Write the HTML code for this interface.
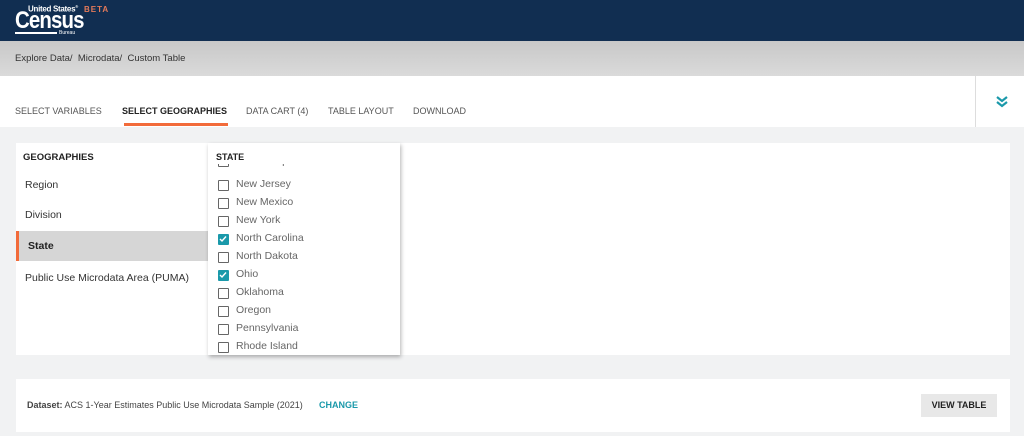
<!DOCTYPE html><html><head><style>
*{margin:0;padding:0;box-sizing:border-box}
body{width:1024px;height:436px;overflow:hidden;background:#f1f2f3;font-family:"Liberation Sans",sans-serif;position:relative}
.a{position:absolute}
.hdr{left:0;top:0;width:1024px;height:41px;background:#112e51}
.bc{left:0;top:41px;width:1024px;height:35px;background:linear-gradient(#c8c8c8,#dadada);font-size:9.5px;color:#333}
.tabs{left:0;top:76px;width:1024px;height:51px;background:#fff}
.tab{position:absolute;top:30px;font-size:9px;color:#555}
.cb{position:absolute;left:10px;width:11px;height:11px;border:1.5px solid #666;border-radius:1px}
.cb.on{background:#1a99aa;border-color:#1a99aa}
.st{position:absolute;left:28px;font-size:10.5px;color:#666}
</style></head><body>
<div class="a hdr">
<div class="a" style="left:28px;top:4px;color:#fff;font-size:8px;font-weight:bold;letter-spacing:-0.3px">United States<sup style="font-size:4px">®</sup></div>
<div class="a" style="left:84px;top:5px;color:#e47a5a;font-size:8px;letter-spacing:1px;font-weight:bold">BETA</div>
<div class="a" style="left:15px;top:9px;color:#fff;font-size:24px;font-weight:bold;letter-spacing:-1px;transform:scaleX(0.85);transform-origin:left;line-height:24px">Census</div>
<div class="a" style="left:15px;top:32px;width:42px;height:2px;background:#fff"></div>
<div class="a" style="left:59px;top:30px;color:#fff;font-size:5px">Bureau</div>
</div>
<div class="a bc"><span class="a" style="left:15px;top:12px">Explore Data/&nbsp; Microdata/&nbsp; Custom Table</span></div>
<div class="a tabs">
<span class="tab" style="left:15px">SELECT VARIABLES</span>
<span class="tab" style="left:122px;color:#222;font-weight:bold">SELECT GEOGRAPHIES</span>
<div class="a" style="left:124px;top:47px;width:104px;height:3px;background:#f26b3a"></div>
<span class="tab" style="left:246px">DATA CART (4)</span>
<span class="tab" style="left:328px">TABLE LAYOUT</span>
<span class="tab" style="left:413px">DOWNLOAD</span>
<div class="a" style="left:975px;top:0;width:1px;height:51px;background:#ddd"></div>
<svg class="a" style="left:995px;top:19px" width="14" height="14" viewBox="0 0 14 14"><path d="M2 2l5 4 5-4M2 7l5 4 5-4" fill="none" stroke="#1a99aa" stroke-width="2.2"/></svg>
</div>
<div class="a" style="left:16px;top:143px;width:994px;height:212px;background:#fff"></div>
<div class="a" style="left:16px;top:143px;width:192px;height:212px;font-size:10.5px;color:#333">
<div class="a" style="left:7px;top:9px;font-size:9.5px;font-weight:bold;color:#222">GEOGRAPHIES</div>
<div class="a" style="left:9px;top:36px">Region</div>
<div class="a" style="left:9px;top:66px">Division</div>
<div class="a" style="left:0;top:88px;width:192px;height:30px;background:#d6d6d6;border-left:3px solid #f26b3a"></div>
<div class="a" style="left:12px;top:97px;font-weight:bold;color:#222">State</div>
<div class="a" style="left:9px;top:129px">Public Use Microdata Area (PUMA)</div>
</div>
<div class="a" style="left:208px;top:143px;width:192px;height:212px;background:#fff;box-shadow:1px 2px 4px rgba(0,0,0,.3);overflow:hidden">
<div class="a" style="left:8px;top:9px;font-size:9px;font-weight:bold;color:#222">STATE</div>
<div class="a" style="left:0;top:21px;width:192px;height:191px;overflow:hidden">
<div class="cb" style="top:-8px"></div><span class="st" style="top:-9px">New Hampshire</span>
<div class="cb" style="top:16px"></div><span class="st" style="top:14px">New Jersey</span>
<div class="cb" style="top:34px"></div><span class="st" style="top:32px">New Mexico</span>
<div class="cb" style="top:52px"></div><span class="st" style="top:50px">New York</span>
<div class="cb on" style="top:70px"><svg width="8" height="8" style="position:absolute;left:0;top:0" viewBox="0 0 8 8"><path d="M1 4l2 2 4-4.5" fill="none" stroke="#fff" stroke-width="1.4"/></svg></div><span class="st" style="top:68px">North Carolina</span>
<div class="cb" style="top:88px"></div><span class="st" style="top:86px">North Dakota</span>
<div class="cb on" style="top:106px"><svg width="8" height="8" style="position:absolute;left:0;top:0" viewBox="0 0 8 8"><path d="M1 4l2 2 4-4.5" fill="none" stroke="#fff" stroke-width="1.4"/></svg></div><span class="st" style="top:104px">Ohio</span>
<div class="cb" style="top:124px"></div><span class="st" style="top:122px">Oklahoma</span>
<div class="cb" style="top:142px"></div><span class="st" style="top:140px">Oregon</span>
<div class="cb" style="top:160px"></div><span class="st" style="top:158px">Pennsylvania</span>
<div class="cb" style="top:178px"></div><span class="st" style="top:176px">Rhode Island</span>
</div></div>
<div class="a" style="left:16px;top:379px;width:994px;height:53px;background:#fff;font-size:9px;color:#444">
<span class="a" style="left:11px;top:21px"><b>Dataset:</b> ACS 1-Year Estimates Public Use Microdata Sample (2021)</span>
<span class="a" style="left:303px;top:21px;color:#1a99aa;font-weight:bold">CHANGE</span>
<div class="a" style="left:905px;top:15px;width:76px;height:23px;background:#e8e8e8;font-size:9px;font-weight:bold;color:#222;text-align:center;line-height:23px">VIEW TABLE</div>
</div>
</body></html>
